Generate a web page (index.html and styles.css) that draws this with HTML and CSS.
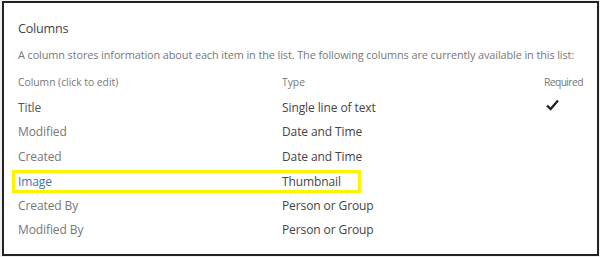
FILE: index.html
```html
<!DOCTYPE html>
<html>
<head>
<meta charset="utf-8">
<link rel="stylesheet" href="styles.css">
</head>
<body>
<div class="frame">
  <h2 class="title">Columns</h2>
  <p class="desc">A column stores information about each item in the list. The following columns are currently available in this list:</p>
  <div class="grid">
    <div class="hd">Column (click to edit)</div><div class="hd">Type</div><div class="hd req">Required</div>
    <div class="name dark">Title</div><div class="type">Single line of text</div><div class="check"><svg width="13" height="12" viewBox="0 0 13 12"><path d="M1 6.5 L4.6 10 L12 1.5" fill="none" stroke="#222" stroke-width="2.3"/></svg></div>
    <div class="name">Modified</div><div class="type">Date and Time</div><div></div>
    <div class="name">Created</div><div class="type">Date and Time</div><div></div>
    <div class="hl"><span class="name link">Image</span><span class="type">Thumbnail</span></div><div></div>
    <div class="name">Created By</div><div class="type">Person or Group</div><div></div>
    <div class="name">Modified By</div><div class="type">Person or Group</div><div></div>
  </div>
</div>
</body>
</html>
```
FILE: styles.css
```css
html, body { margin: 0; padding: 0; }
body {
  background: #f0f0f0;
  width: 600px;
  height: 257px;
  overflow: hidden;
  font-family: "Open Sans", "Noto Sans", sans-serif;
}
.frame {
  box-sizing: border-box;
  margin: 1px 0 0 2px;
  width: 597px;
  height: 255px;
  border: 2px solid #222;
  background: #fff;
  padding: 0 0 0 14px;
}
.title {
  margin: 0;
  padding-top: 17px;
  font-size: 12.6px;
  letter-spacing: -0.2px;
  font-weight: 400;
  color: #444;
  line-height: 18px;
}
.desc {
  margin: 9px 0 0 0;
  font-size: 10.9px;
  letter-spacing: -0.1px;
  color: #777;
  line-height: 16px;
  white-space: nowrap;
}
.grid {
  margin-top: 12px;
  display: grid;
  grid-template-columns: 264px 262px auto;
  grid-template-rows: 20px;
  grid-auto-rows: 24.5px;
  align-items: center;
}
.hd {
  font-size: 10.3px;
  color: #777;
  height: 14px;
  line-height: 14px;
  align-self: start;
}
.req { letter-spacing: -0.6px; }
.name { font-size: 12px; letter-spacing: -0.1px; color: #777; }
.name.dark { color: #555; }
.type { font-size: 12px; letter-spacing: -0.1px; color: #444; }
.link { color: #3a72b8; }
.check { padding-left: 2px; padding-bottom: 4px; }
.hl {
  grid-column: 1 / span 2;
  box-sizing: border-box;
  margin-left: -6px;
  margin-top: 2px;
  width: 349px;
  height: 23px;
  border: 3px solid #fff200;
  display: grid;
  grid-template-columns: 264px auto;
  align-items: center;
  padding-left: 3px;
}
```
